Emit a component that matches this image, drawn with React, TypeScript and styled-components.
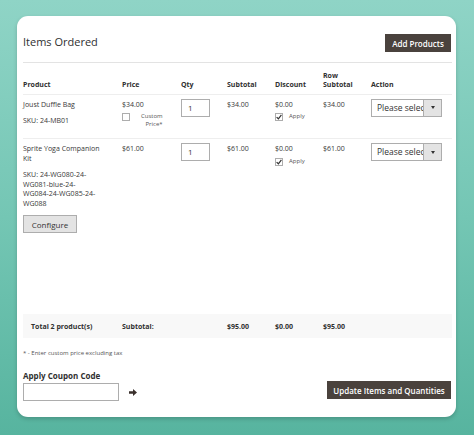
import React from "react";
import styled, { createGlobalStyle } from "styled-components";

const Global = createGlobalStyle`
  html, body { margin: 0; padding: 0; }
  body {
    width: 474px;
    height: 435px;
    overflow: hidden;
    background: linear-gradient(180deg, #8fd4c6 0%, #74c6b4 50%, #57b49f 100%);
    font-family: "Open Sans", "Noto Sans", sans-serif;
    color: #333;
  }
  #root { padding: 16px 18px 0 17px; }
`;

const Card = styled.div`
  width: 439px;
  height: 401px;
  box-sizing: border-box;
  background: #fff;
  border-radius: 11px;
  box-shadow: 0 2px 4px rgba(0, 0, 0, 0.18);
  padding: 13px 4px 0 6px;
  display: flex;
  flex-direction: column;
`;

const TitleBar = styled.div`
  display: flex;
  justify-content: space-between;
  align-items: flex-start;
  height: 34px;
  box-sizing: border-box;
  padding-top: 5px;
  border-bottom: 1px solid #e3e3e3;
`;

const Title = styled.h2`
  margin: 0;
  font-size: 11px;
  line-height: 16px;
  font-weight: 400;
  color: #303030;
`;

const DarkButton = styled.button<{ $w: number }>`
  width: ${(p) => p.$w}px;
  height: 18px;
  border: none;
  background: #4a423d;
  color: #fff;
  font-family: inherit;
  font-size: 8px;
  font-weight: 600;
  padding: 0;
  cursor: pointer;
  margin-right: 1px;
`;

const Table = styled.table`
  width: 429px;
  border-collapse: collapse;
  table-layout: fixed;
  font-size: 7px;
`;

const Th = styled.th`
  text-align: left;
  vertical-align: bottom;
  font-weight: 700;
  color: #303030;
  font-size: 7px;
  line-height: 9px;
  padding: 0 0 5px 0;
  height: 31px;
  box-sizing: border-box;
  border-bottom: 1px solid #eee;
`;

const Tr = styled.tr<{ $last?: boolean }>`
  border-bottom: ${(p) => (p.$last ? "none" : "1px solid #eee")};
`;

const Td = styled.td<{ $pb?: number }>`
  vertical-align: top;
  padding: 5px 6px ${(p) => p.$pb ?? 10}px 0;
  line-height: 9.5px;
  color: #383838;
`;

const Sku = styled.div`
  margin-top: 7px;
`;

const QtyInput = styled.div`
  width: 29px;
  height: 18px;
  box-sizing: border-box;
  border: 1px solid #adadad;
  font-size: 8px;
  line-height: 16px;
  padding-left: 6px;
  position: relative;
  top: -1px;
`;

const Box = styled.span`
  display: inline-flex;
  align-items: center;
  justify-content: center;
  width: 8px;
  height: 8px;
  border: 1px solid #adadad;
  background: #fff;
  box-sizing: border-box;
  flex: none;
  margin-top: 1px;
`;

const CheckRow = styled.div<{ $gap: number }>`
  display: flex;
  align-items: flex-start;
  margin-top: 3px;
  gap: ${(p) => p.$gap}px;
`;

const SmallLabel = styled.span<{ $right?: boolean }>`
  font-size: 6px;
  line-height: 8px;
  color: #555;
  text-align: ${(p) => (p.$right ? "right" : "left")};
`;

const Select = styled.div`
  display: flex;
  width: 71px;
  height: 18px;
  box-sizing: border-box;
  border: 1px solid #adadad;
  position: relative;
  top: -1px;
`;

const SelectText = styled.div`
  width: 40px;
  overflow: hidden;
  white-space: nowrap;
  font-size: 8.5px;
  line-height: 16px;
  padding: 0 6px 0 5px;
  color: #333;
`;

const SelectArrow = styled.div`
  flex: 1;
  background: #e3e3e3;
  border-left: 1px solid #adadad;
  display: flex;
  align-items: center;
  justify-content: center;
  &::after {
    content: "";
    border-left: 2px solid transparent;
    border-right: 2px solid transparent;
    border-top: 3px solid #333;
  }
`;

const LightButton = styled.button`
  margin-top: 7px;
  width: 54px;
  height: 18px;
  border: 1px solid #adadad;
  background: #e3e3e3;
  font-family: inherit;
  font-size: 8px;
  color: #333;
  padding: 0;
`;

const FootTd = styled.td<{ $pl?: number }>`
  background: #f8f8f8;
  font-weight: 700;
  color: #303030;
  font-size: 7px;
  height: 24px;
  padding: 0 0 0 ${(p) => p.$pl ?? 0}px;
`;

const Note = styled.div`
  font-size: 6px;
  color: #555;
  margin-top: 11px;
`;

const CouponLabel = styled.div`
  font-size: 8px;
  line-height: 11px;
  font-weight: 700;
  color: #303030;
  margin-top: 13px;
`;

const BottomRow = styled.div`
  display: flex;
  align-items: flex-start;
  justify-content: space-between;
`;

const CouponGroup = styled.div`
  display: flex;
  align-items: center;
  gap: 10px;
  margin-top: 2px;
`;

const CouponInput = styled.div`
  width: 96px;
  height: 18px;
  box-sizing: border-box;
  border: 1px solid #adadad;
  background: #fff;
`;

const Check = () => (
  <svg width="6" height="6" viewBox="0 0 10 10">
    <path d="M1 5.2 L4 8 L9 1.5" fill="none" stroke="#333" strokeWidth="2" />
  </svg>
);

const Arrow = () => (
  <svg width="8" height="7" viewBox="0 0 8 7">
    <path d="M0 2.2 H4 V0 L8 3.5 L4 7 V4.8 H0 Z" fill="#3a302c" />
  </svg>
);

export default function App() {
  return (
    <>
      <Global />
      <Card>
        <TitleBar>
          <Title>Items Ordered</Title>
          <DarkButton $w={66}>Add Products</DarkButton>
        </TitleBar>
        <Table>
          <colgroup>
            <col style={{ width: 99 }} />
            <col style={{ width: 59 }} />
            <col style={{ width: 46 }} />
            <col style={{ width: 48 }} />
            <col style={{ width: 48 }} />
            <col style={{ width: 48 }} />
            <col style={{ width: 81 }} />
          </colgroup>
          <thead>
            <tr>
              <Th>Product</Th>
              <Th>Price</Th>
              <Th>Qty</Th>
              <Th>Subtotal</Th>
              <Th>Discount</Th>
              <Th>
                Row
                <br />
                Subtotal
              </Th>
              <Th>Action</Th>
            </tr>
          </thead>
          <tbody>
            <Tr>
              <Td>
                <div>Joust Duffle Bag</div>
                <Sku>SKU: 24-MB01</Sku>
              </Td>
              <Td>
                <div>$34.00</div>
                <CheckRow $gap={11}>
                  <Box />
                  <SmallLabel $right>
                    Custom
                    <br />
                    Price*
                  </SmallLabel>
                </CheckRow>
              </Td>
              <Td>
                <QtyInput>1</QtyInput>
              </Td>
              <Td>$34.00</Td>
              <Td>
                <div>$0.00</div>
                <CheckRow $gap={6}>
                  <Box>
                    <Check />
                  </Box>
                  <SmallLabel>Apply</SmallLabel>
                </CheckRow>
              </Td>
              <Td>$34.00</Td>
              <Td>
                <Select>
                  <SelectText>Please select</SelectText>
                  <SelectArrow />
                </Select>
              </Td>
            </Tr>
            <Tr $last>
              <Td $pb={81}>
                <div>
                  Sprite Yoga Companion
                  <br />
                  Kit
                </div>
                <Sku>
                  SKU: 24-WG080-24-
                  <br />
                  WG081-blue-24-
                  <br />
                  WG084-24-WG085-24-
                  <br />
                  WG088
                </Sku>
                <LightButton>Configure</LightButton>
              </Td>
              <Td>$61.00</Td>
              <Td>
                <QtyInput>1</QtyInput>
              </Td>
              <Td>$61.00</Td>
              <Td>
                <div>$0.00</div>
                <CheckRow $gap={6}>
                  <Box>
                    <Check />
                  </Box>
                  <SmallLabel>Apply</SmallLabel>
                </CheckRow>
              </Td>
              <Td>$61.00</Td>
              <Td>
                <Select>
                  <SelectText>Please select</SelectText>
                  <SelectArrow />
                </Select>
              </Td>
            </Tr>
          </tbody>
          <tfoot>
            <tr>
              <FootTd $pl={8}>Total 2 product(s)</FootTd>
              <FootTd>Subtotal:</FootTd>
              <FootTd />
              <FootTd>$95.00</FootTd>
              <FootTd>$0.00</FootTd>
              <FootTd>$95.00</FootTd>
              <FootTd />
            </tr>
          </tfoot>
        </Table>
        <Note>* - Enter custom price excluding tax</Note>
        <CouponLabel>Apply Coupon Code</CouponLabel>
        <BottomRow>
          <CouponGroup>
            <CouponInput />
            <Arrow />
          </CouponGroup>
          <DarkButton $w={124}>Update Items and Quantities</DarkButton>
        </BottomRow>
      </Card>
    </>
  );
}
